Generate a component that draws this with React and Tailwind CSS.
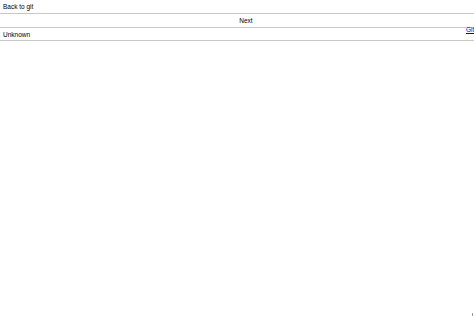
export default function App() {
  return (
    <div
      className="relative w-[474px] h-[317px] overflow-hidden bg-white text-[6.5px] text-black"
      style={{ fontFamily: '"Liberation Sans", Arial, sans-serif' }}
    >
      <div className="h-[14px] flex items-center pt-px px-[3px] border-b border-[#c8c8c8]">
        Back to git
      </div>
      <div className="h-[14px] flex items-center justify-center pl-[18px] border-b border-[#c8c8c8]">
        Next
      </div>
      <div className="h-[13px] flex items-center pt-px px-[3px] border-b border-[#c8c8c8]">
        Unknown
      </div>
      <a href="#" className="absolute left-[466px] top-[25px] text-[6.5px] text-[#0000ee] underline">
        Git
      </a>
      <div className="absolute right-[1px] bottom-[1px] w-px h-[3px] bg-[#999]" />
    </div>
  );
}
